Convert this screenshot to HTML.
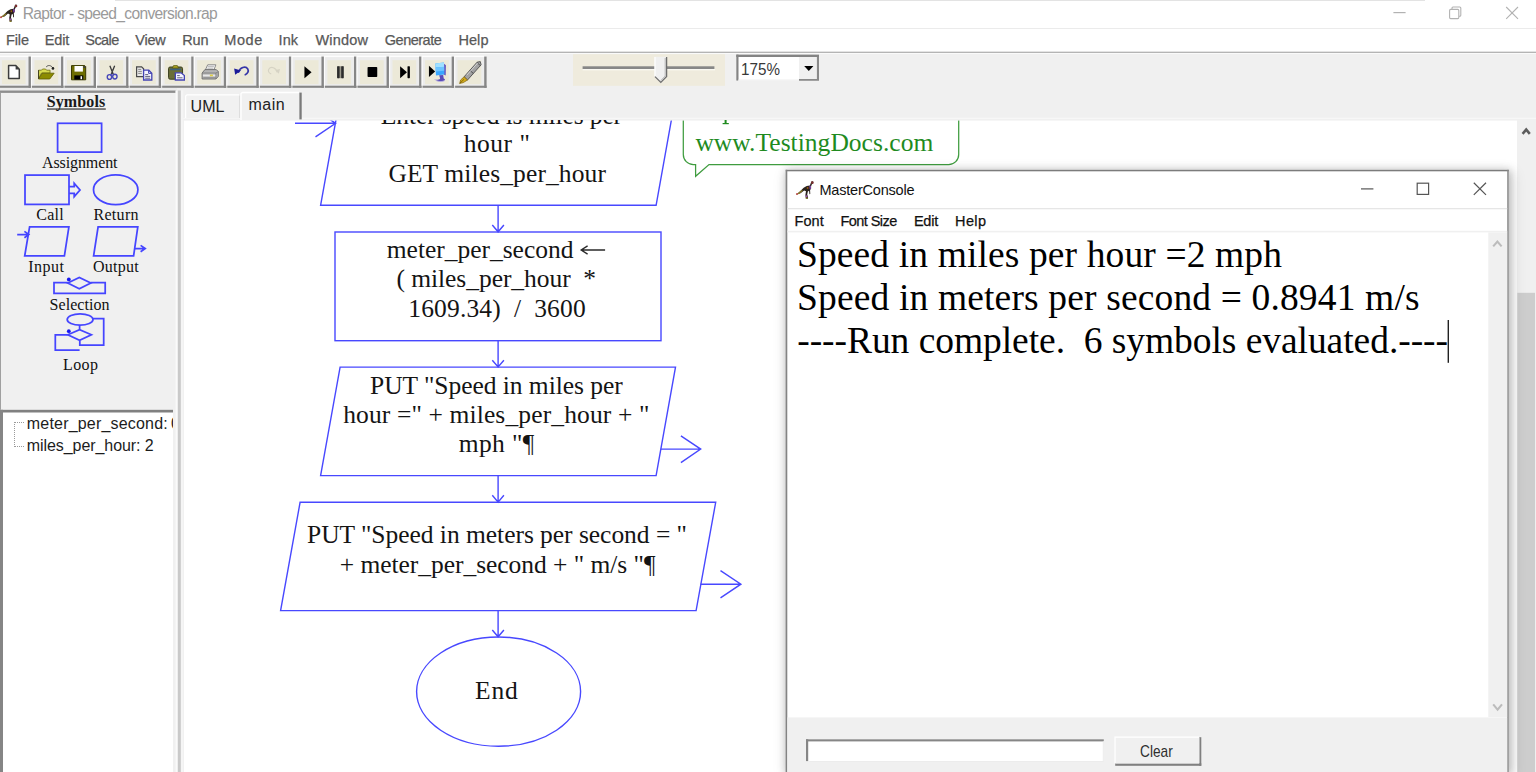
<!DOCTYPE html>
<html>
<head>
<meta charset="utf-8">
<title>Raptor - speed_conversion.rap</title>
<style>
html,body{margin:0;padding:0;width:1536px;height:772px;overflow:hidden;}
body{width:1536px;height:772px;overflow:hidden;position:relative;background:#f0f0f0;font-family:"Liberation Sans",sans-serif;}
.abs{position:absolute;}
.t{position:absolute;white-space:pre;line-height:1;}
#titlebar{left:0;top:0;width:1536px;height:28px;background:#fff;}
#menubar{left:0;top:29px;width:1536px;height:23px;background:#fff;}
.mi{position:absolute;top:32px;font-size:14.5px;color:#585858;-webkit-text-stroke:0.25px #585858;white-space:pre;line-height:16px;}
.tb{position:absolute;top:56px;width:30px;height:30px;background:#ece9d8;box-sizing:border-box;border:2px solid #f0f0f0;box-shadow:1px 1px 0 0 #7a7a7a, 2px 2px 0 0 #a0a0a0, -1px -1px 0 0 #fff;}
.serif{font-family:"Liberation Serif",serif;}
.fc{font-size:25.5px;color:#141414;}
</style>
</head>
<body>

<!-- ===== Title bar ===== -->
<div id="titlebar" class="abs"></div>
<div class="abs" style="left:115px;top:0;width:1310px;height:1px;background:#e3e3e3;"></div>
<div class="abs" style="left:0;top:28px;width:1536px;height:1px;background:#ebebeb;"></div>
<div class="t" style="left:22.7px;top:6.2px;font-size:15.6px;letter-spacing:-0.68px;color:#9a9a9a;">Raptor - speed_conversion.rap</div>


<svg class="abs" style="left:0;top:3px;" width="20" height="22" viewBox="0 0 20 22">
  <path d="M0.2 14.6 L3.5 12 L7.5 8 L10.5 6.2 L13.6 5.8 L14.6 3.2 L15.4 1.6 L16.8 1.8 L17 3.4 L15.6 4.6 L14.8 6.4 L14.8 9 L13.8 10.2 L14 14 L13.2 14.4 L12.8 11 L11.6 11.6 L11 14.5 L11.8 17.2 L11.4 19 L9.6 18.6 L9.2 15 L9.8 11.4 L8 10.6 L4.5 13.4 Z" fill="#2a221c"/>
  <path d="M0.2 14.6 L3.5 12 L6 10 L6.6 11.2 L3 14 Z" fill="#8a7a28"/>
  <circle cx="1" cy="14.2" r="1" fill="#c05050"/>
  <circle cx="16" cy="3" r="1.3" fill="#7a3030"/>
  <path d="M13 6.2 L14.6 6 L14.6 9 L13.4 9.4 Z" fill="#8040b0"/>
  <path d="M10.6 7.2 L12.2 7.4 L12 9.2 L10.6 9 Z" fill="#a05a10"/>
  <path d="M9.4 15.4 L11 15.6 L11.2 17.4 L9.6 17.4 Z" fill="#a050b0"/>
  <path d="M9.6 17.6 L11.4 17.6 L11.2 19 L9.6 18.8 Z" fill="#8a8420"/>
</svg>
<!-- window controls -->
<svg class="abs" style="left:1380px;top:0;" width="156" height="28" viewBox="1380 0 156 28" fill="none" stroke="#b2b2b2">
  <path d="M1393.4 12.6 H1405.6" stroke-width="1.2"/>
  <rect x="1449.6" y="9.4" width="9.2" height="9.2" rx="1" stroke-width="1.1"/>
  <path d="M1452 9.2 V8 a1 1 0 0 1 1 -1 H1459.8 a1 1 0 0 1 1 1 V15.2 a1 1 0 0 1 -1 1 H1459" stroke-width="1.1"/>
  <path d="M1506.2 7 L1518 18.8 M1518 7 L1506.2 18.8" stroke-width="1.1"/>
</svg>

<!-- ===== Menu bar ===== -->
<div id="menubar" class="abs"></div>
<div class="abs" style="left:0;top:51px;width:1536px;height:1px;background:#e4e4e4;"></div>
<div class="abs" style="left:0;top:52px;width:1536px;height:1px;background:#b4b4b4;"></div>
<div class="abs" style="left:0;top:53px;width:1536px;height:1px;background:#fafafa;"></div>

<div class="mi" id="m_File" style="left:6px;letter-spacing:-0.14px;">File</div>
<div class="mi" id="m_Edit" style="left:44.8px;letter-spacing:-0.19px;">Edit</div>
<div class="mi" id="m_Scale" style="left:85.3px;letter-spacing:-0.58px;">Scale</div>
<div class="mi" id="m_View" style="left:135.3px;letter-spacing:-0.27px;">View</div>
<div class="mi" id="m_Run" style="left:182.3px;letter-spacing:-0.21px;">Run</div>
<div class="mi" id="m_Mode" style="left:224.3px;letter-spacing:0.56px;">Mode</div>
<div class="mi" id="m_Ink" style="left:278.5px;letter-spacing:0.14px;">Ink</div>
<div class="mi" id="m_Window" style="left:315.5px;letter-spacing:0.16px;">Window</div>
<div class="mi" id="m_Generate" style="left:384.8px;letter-spacing:-0.5px;">Generate</div>
<div class="mi" id="m_Help" style="left:458.5px;letter-spacing:0.04px;">Help</div>

<!-- ===== Toolbar ===== -->
<!-- TOOLBAR-SVG-START -->
<svg class="abs" style="left:0;top:54px;" width="520" height="38" viewBox="0 54 520 38">
<rect x="-1.50" y="55.7" width="30" height="30" fill="#fdfdfd"/>
<rect x="-0.40" y="57.1" width="28.9" height="28.6" fill="#ececec"/>
<rect x="28.50" y="56.6" width="2.4" height="31.2" fill="#868686"/>
<rect x="-0.60" y="85.7" width="31.5" height="2.1" fill="#868686"/>
<rect x="1.90" y="60.2" width="23.7" height="23.9" fill="#ece9d8"/>
<rect x="31.05" y="55.7" width="30" height="30" fill="#fdfdfd"/>
<rect x="32.15" y="57.1" width="28.9" height="28.6" fill="#ececec"/>
<rect x="61.05" y="56.6" width="2.4" height="31.2" fill="#868686"/>
<rect x="31.95" y="85.7" width="31.5" height="2.1" fill="#868686"/>
<rect x="34.45" y="60.2" width="23.7" height="23.9" fill="#ece9d8"/>
<rect x="63.60" y="55.7" width="30" height="30" fill="#fdfdfd"/>
<rect x="64.70" y="57.1" width="28.9" height="28.6" fill="#ececec"/>
<rect x="93.60" y="56.6" width="2.4" height="31.2" fill="#868686"/>
<rect x="64.50" y="85.7" width="31.5" height="2.1" fill="#868686"/>
<rect x="67.00" y="60.2" width="23.7" height="23.9" fill="#ece9d8"/>
<rect x="96.15" y="55.7" width="30" height="30" fill="#fdfdfd"/>
<rect x="97.25" y="57.1" width="28.9" height="28.6" fill="#ececec"/>
<rect x="126.15" y="56.6" width="2.4" height="31.2" fill="#868686"/>
<rect x="97.05" y="85.7" width="31.5" height="2.1" fill="#868686"/>
<rect x="99.55" y="60.2" width="23.7" height="23.9" fill="#ece9d8"/>
<rect x="128.70" y="55.7" width="30" height="30" fill="#fdfdfd"/>
<rect x="129.80" y="57.1" width="28.9" height="28.6" fill="#ececec"/>
<rect x="158.70" y="56.6" width="2.4" height="31.2" fill="#868686"/>
<rect x="129.60" y="85.7" width="31.5" height="2.1" fill="#868686"/>
<rect x="132.10" y="60.2" width="23.7" height="23.9" fill="#ece9d8"/>
<rect x="161.25" y="55.7" width="30" height="30" fill="#fdfdfd"/>
<rect x="162.35" y="57.1" width="28.9" height="28.6" fill="#ececec"/>
<rect x="191.25" y="56.6" width="2.4" height="31.2" fill="#868686"/>
<rect x="162.15" y="85.7" width="31.5" height="2.1" fill="#868686"/>
<rect x="164.65" y="60.2" width="23.7" height="23.9" fill="#ece9d8"/>
<rect x="193.80" y="55.7" width="30" height="30" fill="#fdfdfd"/>
<rect x="194.90" y="57.1" width="28.9" height="28.6" fill="#ececec"/>
<rect x="223.80" y="56.6" width="2.4" height="31.2" fill="#868686"/>
<rect x="194.70" y="85.7" width="31.5" height="2.1" fill="#868686"/>
<rect x="197.20" y="60.2" width="23.7" height="23.9" fill="#ece9d8"/>
<rect x="226.35" y="55.7" width="30" height="30" fill="#fdfdfd"/>
<rect x="227.45" y="57.1" width="28.9" height="28.6" fill="#ececec"/>
<rect x="256.35" y="56.6" width="2.4" height="31.2" fill="#868686"/>
<rect x="227.25" y="85.7" width="31.5" height="2.1" fill="#868686"/>
<rect x="229.75" y="60.2" width="23.7" height="23.9" fill="#ece9d8"/>
<rect x="258.90" y="55.7" width="30" height="30" fill="#fdfdfd"/>
<rect x="260.00" y="57.1" width="28.9" height="28.6" fill="#ececec"/>
<rect x="288.90" y="56.6" width="2.4" height="31.2" fill="#868686"/>
<rect x="259.80" y="85.7" width="31.5" height="2.1" fill="#868686"/>
<rect x="262.30" y="60.2" width="23.7" height="23.9" fill="#ece9d8"/>
<rect x="291.45" y="55.7" width="30" height="30" fill="#fdfdfd"/>
<rect x="292.55" y="57.1" width="28.9" height="28.6" fill="#ececec"/>
<rect x="321.45" y="56.6" width="2.4" height="31.2" fill="#868686"/>
<rect x="292.35" y="85.7" width="31.5" height="2.1" fill="#868686"/>
<rect x="294.85" y="60.2" width="23.7" height="23.9" fill="#ece9d8"/>
<rect x="324.00" y="55.7" width="30" height="30" fill="#fdfdfd"/>
<rect x="325.10" y="57.1" width="28.9" height="28.6" fill="#ececec"/>
<rect x="354.00" y="56.6" width="2.4" height="31.2" fill="#868686"/>
<rect x="324.90" y="85.7" width="31.5" height="2.1" fill="#868686"/>
<rect x="327.40" y="60.2" width="23.7" height="23.9" fill="#ece9d8"/>
<rect x="356.55" y="55.7" width="30" height="30" fill="#fdfdfd"/>
<rect x="357.65" y="57.1" width="28.9" height="28.6" fill="#ececec"/>
<rect x="386.55" y="56.6" width="2.4" height="31.2" fill="#868686"/>
<rect x="357.45" y="85.7" width="31.5" height="2.1" fill="#868686"/>
<rect x="359.95" y="60.2" width="23.7" height="23.9" fill="#ece9d8"/>
<rect x="389.10" y="55.7" width="30" height="30" fill="#fdfdfd"/>
<rect x="390.20" y="57.1" width="28.9" height="28.6" fill="#ececec"/>
<rect x="419.10" y="56.6" width="2.4" height="31.2" fill="#868686"/>
<rect x="390.00" y="85.7" width="31.5" height="2.1" fill="#868686"/>
<rect x="392.50" y="60.2" width="23.7" height="23.9" fill="#ece9d8"/>
<rect x="421.65" y="55.7" width="30" height="30" fill="#fdfdfd"/>
<rect x="422.75" y="57.1" width="28.9" height="28.6" fill="#ececec"/>
<rect x="451.65" y="56.6" width="2.4" height="31.2" fill="#868686"/>
<rect x="422.55" y="85.7" width="31.5" height="2.1" fill="#868686"/>
<rect x="425.05" y="60.2" width="23.7" height="23.9" fill="#ece9d8"/>
<rect x="454.20" y="55.7" width="30" height="30" fill="#fdfdfd"/>
<rect x="455.30" y="57.1" width="28.9" height="28.6" fill="#ececec"/>
<rect x="484.20" y="56.6" width="2.4" height="31.2" fill="#868686"/>
<rect x="455.10" y="85.7" width="31.5" height="2.1" fill="#868686"/>
<rect x="457.60" y="60.2" width="23.7" height="23.9" fill="#ece9d8"/>
<g transform="translate(0.00,0)"><path d="M8.6 65.6 H15.8 L19.3 69.2 V78.6 H8.6 Z" fill="#fff" stroke="#3c3c3c" stroke-width="1.5" stroke-linejoin="round"/><path d="M15.6 65.6 V69.4 H19.3 Z" fill="#3c3c3c"/></g>
<g transform="translate(32.55,0)"><path d="M6 70.2 H9 L10 69 H13 L14 70.2 H17.5 V73 H9 L6 78.6 Z" fill="#d8dc50" stroke="#707010" stroke-width="0.8"/><path d="M9.6 73.2 H21.6 L17.2 79 H6 Z" fill="#8c8c00" stroke="#5c5c00" stroke-width="0.8"/><path d="M6 70.2 V78.8" stroke="#404020" stroke-width="1"/><path d="M13.6 67 C15.6 64.6 18.6 65.4 20 67.6" fill="none" stroke="#505050" stroke-width="1"/><circle cx="20.4" cy="68.4" r="1.3" fill="#202020"/></g>
<g transform="translate(65.10,0)"><path d="M6.4 65.6 H19.6 L20.6 66.6 V79.8 H6.4 Z" fill="#6e6e00" stroke="#3a3a00" stroke-width="1"/><rect x="9.4" y="66" width="8.4" height="5.6" fill="#fff"/><rect x="9.2" y="75.4" width="9" height="4.2" fill="#000"/><rect x="15.4" y="76.2" width="1.6" height="3" fill="#fff"/><rect x="18.4" y="66.2" width="1.4" height="1.6" fill="#303060"/></g>
<g transform="translate(97.65,0)"><path d="M12.2 65.8 L15.6 74.2 M17 65.8 L13.6 74.2" stroke="#383838" stroke-width="1.3" fill="none"/><path d="M13.6 69.6 L14.6 72.4 L15.6 69.6 Z" fill="#484848"/><ellipse cx="11.8" cy="77" rx="2.2" ry="2.4" fill="none" stroke="#4848b8" stroke-width="1.4"/><ellipse cx="17.2" cy="76.6" rx="2.2" ry="2.4" fill="none" stroke="#4848b8" stroke-width="1.4"/><path d="M14 74 L12.6 75.2 M15.4 74 L16.6 75" stroke="#4848b8" stroke-width="1.2"/></g>
<g transform="translate(130.20,0)"><path d="M6.4 66.8 H11.4 L13.4 68.8 V76.6 H6.4 Z" fill="#e8e8e8" stroke="#484848" stroke-width="1.2"/><path d="M8 69.4 H11 M8 71.4 H11.6 M8 73.4 H11.6" stroke="#707070" stroke-width="0.8"/><path d="M13.4 70.2 H18.6 L21.6 73.2 V80 H13.4 Z" fill="#f4f4ff" stroke="#4444b4" stroke-width="1.3"/><path d="M18.4 70.2 V73.4 H21.6" fill="none" stroke="#4444b4" stroke-width="1"/><path d="M15 74.6 H18 M15 76.4 H20 M15 78.2 H20" stroke="#505070" stroke-width="0.9"/></g>
<g transform="translate(162.75,0)"><rect x="5.8" y="67" width="14" height="12.2" rx="1.6" fill="#6a6e38" stroke="#3c4020" stroke-width="1"/><rect x="7.4" y="68.6" width="10.8" height="1.6" fill="#3a6080"/><path d="M9.6 68 L10.8 65.6 H14.6 L15.8 68 Z" fill="#b0a820" stroke="#505010" stroke-width="0.7"/><path d="M12.6 72.8 H18.4 L21.6 75.6 V80 H12.6 Z" fill="#f4f4ff" stroke="#4444b4" stroke-width="1.3"/><path d="M14.4 75.6 H17 M14.4 77.8 H19.8" stroke="#505070" stroke-width="0.9"/></g>
<g transform="translate(195.30,0)"><path d="M10 70 L12.4 64.8 H20.6 L18.6 70 Z" fill="#f6f6f6" stroke="#808080" stroke-width="0.9"/><path d="M12.6 66.6 H18.6 M12 68.2 H18" stroke="#a0a0a0" stroke-width="0.7"/><path d="M6.8 73 L9.6 69.6 H21 L23 71.6 V76.4 L20.6 79 H6.8 Z" fill="#b4b4b4" stroke="#6c6c6c" stroke-width="0.9"/><path d="M6.8 73 H20.6 L23 71.6 M20.6 73 V79" stroke="#787878" stroke-width="0.8" fill="none"/><rect x="7.6" y="74.6" width="12.4" height="1.8" fill="#e8e8e8"/><rect x="14.6" y="74.6" width="3" height="1.6" fill="#e0d040"/><path d="M8 77.6 H20" stroke="#8c8c8c" stroke-width="0.8"/></g>
<g transform="translate(227.85,0)"><path d="M10.8 72.2 C11.8 67.4 17.8 65.6 19.9 69 C21.2 71.4 19.6 73.8 17.4 74.7" fill="none" stroke="#3636a8" stroke-width="1.7" stroke-linecap="round"/><path d="M6.3 68.4 L13.2 70.4 L7.3 74.8 Z" fill="#1c1c98"/></g>
<g transform="translate(260.40,0)"><path d="M16.6 72 C15.8 67.6 10.4 66 8.4 69.2 C7.4 71 8.4 73 10.4 73.8" fill="none" stroke="#d6d3c4" stroke-width="1.2" stroke-linecap="round"/><path d="M19.6 69 L15 70 L18.4 73.8 Z" fill="#d6d3c4"/></g>
<g transform="translate(292.95,0)"><path d="M11.5 66.2 L18.6 72.2 L11.5 78.2 Z" fill="#000"/></g>
<g transform="translate(325.50,0)"><rect x="11.7" y="66.2" width="6.5" height="12" fill="#9c9a8c"/><rect x="11.6" y="66.2" width="2.5" height="12" rx="0.6" fill="#2c2c2c"/><rect x="15.7" y="66.2" width="2.5" height="12" rx="0.6" fill="#2c2c2c"/></g>
<g transform="translate(358.05,0)"><rect x="9.5" y="67" width="9.7" height="10" rx="0.8" fill="#000"/></g>
<g transform="translate(390.60,0)"><path d="M9.5 66.2 L16.4 72.2 L9.5 78.2 Z" fill="#000"/><rect x="16.9" y="66.2" width="2.4" height="12" rx="0.6" fill="#000"/></g>
<g transform="translate(423.15,0)"><path d="M20.6 63.4 L22.8 65.2 L22.6 75.4 L20.4 74.6 Z" fill="#6a5cc0"/><path d="M12.2 63.4 L20.8 62.6 L21.2 74.6 L12.8 75.4 Z" fill="#3aa6ff"/><path d="M12.2 63.4 L20.8 62.6 L20.95 67 L12.4 67.6 Z" fill="#a0e0ff"/><path d="M12.4 67.4 L20.95 66.8 L21.08 70.8 L12.6 71.5 Z" fill="#6cc4ff"/><path d="M16 75.2 L20 75 L20.6 78.6 C22 79 22.4 80 21 80.8 C18 82 14 81.6 12.4 79.8 C14 80 16.6 79.6 17 78.4 Z" fill="#5a4cb8"/><path d="M11.6 79.2 C13 81.6 19 82.4 21.8 80.4" fill="none" stroke="#b8b0e0" stroke-width="1"/><path d="M5.8 65.8 L12 71.4 L5.8 77 Z" fill="#000"/></g>
<g transform="translate(455.70,0)"><path d="M8.4 76.8 L21.4 62.2 L24.6 61.6 L25.4 64.8 L11.8 80 Z" fill="#a2a2a2" stroke="#4e4e4e" stroke-width="0.9" stroke-linejoin="round"/><path d="M14.2 70.4 L17.6 73.4 M21.2 62.6 L24.8 65.6" stroke="#484848" stroke-width="0.9"/><path d="M11 75.2 L22 63" stroke="#dadada" stroke-width="0.9"/><path d="M8.4 76.8 L11.8 80 L7.6 82.6 L4 83.4 L4.9 80 Z" fill="#d2aa1a" stroke="#7c600a" stroke-width="0.7"/><path d="M4 83.4 L8.4 79.2" stroke="#6c5408" stroke-width="0.7"/></g>
</svg>
<!-- TOOLBAR-SVG-END -->

<!-- SLIDER-START -->
<svg class="abs" style="left:560px;top:50px;" width="280" height="42" viewBox="560 50 280 42">
  <rect x="573" y="54.2" width="152" height="31.6" fill="#efebdd"/>
  <rect x="582.6" y="66.3" width="131.8" height="2.8" fill="#878787"/>
  <rect x="582.6" y="69.1" width="132.4" height="1.2" fill="#fbfbf6"/>
  <path d="M654.6 56.8 H667 V76.4 L660.8 82.8 L654.6 76.4 Z" fill="#f0f0f0"/>
  <path d="M655 57 V76.2" stroke="#ffffff" stroke-width="1.2" fill="none"/>
  <path d="M666.6 57 V76.4 L660.8 82.4 L655 76.6" stroke="#6e6e6e" stroke-width="1.3" fill="none"/>
  <path d="M665.2 58 V76 L660.8 80.6" stroke="#b4b4b4" stroke-width="1" fill="none"/>
  <!-- combo -->
  <rect x="736.3" y="54.6" width="82.7" height="26.4" fill="#ffffff"/>
  <rect x="736.3" y="54.6" width="82.7" height="2.4" fill="#848484"/>
  <rect x="736.3" y="54.6" width="2.2" height="26" fill="#848484"/>
  <rect x="738.5" y="79.4" width="60.5" height="1.6" fill="#f2f2f2"/>
  <rect x="799" y="57" width="20" height="23.8" fill="#8a8a8a"/>
  <rect x="799" y="57" width="17.9" height="22" fill="#f0f0f0"/>
  <path d="M804.2 66 H813.4 L808.8 71 Z" fill="#000"/>
</svg>
<div class="t" style="left:741px;top:61px;font-size:17.2px;color:#383838;transform:scaleX(0.885);transform-origin:0 0;">175%</div>
<!-- SLIDER-END -->

<!-- ===== Left panel ===== -->
<!-- LEFT-START -->
<svg class="abs" style="left:0;top:88px;" width="184" height="684" viewBox="0 88 184 684">
  <!-- panel frame -->
  <rect x="0" y="87.8" width="177" height="2.7" fill="#ebebeb"/>
  <rect x="0" y="90.5" width="175.6" height="2.4" fill="#8e8e8e"/>
  <rect x="0" y="92.9" width="1" height="317" fill="#a0a0a0"/>
  <rect x="175.6" y="91" width="1.6" height="681" fill="#fafafa"/>
  <rect x="177.9" y="90.5" width="3" height="682" fill="#c9c9c9"/>
  <rect x="180.9" y="90.5" width="2.4" height="682" fill="#f5f5f5"/>
  <!-- watch window -->
  <rect x="0" y="409.8" width="173" height="363" fill="#ffffff"/>
  <rect x="0" y="409.8" width="173" height="2.7" fill="#808080"/>
  <rect x="0" y="409.8" width="3" height="363" fill="#858585"/>
  <!-- tree dotted lines -->
  <path d="M14.5 422 V447" stroke="#9a9a9a" stroke-width="1" stroke-dasharray="1 1" fill="none"/>
  <path d="M15 422.5 H25" stroke="#9a9a9a" stroke-width="1" stroke-dasharray="1 1" fill="none"/>
  <path d="M15 446.5 H25" stroke="#9a9a9a" stroke-width="1" stroke-dasharray="1 1" fill="none"/>
  <!-- symbols -->
  <rect x="47" y="108.2" width="58.8" height="1.7" fill="#6a6a6a"/>
  <g fill="none" stroke="#4545ff" stroke-width="1.75">
    <rect x="57.6" y="123.3" width="44" height="28.8"/>
    <rect x="25" y="175.1" width="44" height="29.3"/>
    <path d="M69 186.6 H74.2 V183.4 L80 190 L74.2 196.6 V193.4 H69"/>
    <ellipse cx="115.7" cy="189.7" rx="22.2" ry="14.9"/>
    <path d="M29.6 226.8 H68.9 L64.4 255.9 H24.7 Z"/>
    <path d="M17.2 234.6 H28.6 M24.4 231.4 L28.8 234.6 L24.4 237.8"/>
    <path d="M98.1 226.8 H137.8 L133.6 255.9 H93.6 Z"/>
    <path d="M135 248.6 H145 M140.6 245.4 L145.2 248.6 L140.6 251.8"/>
    <path d="M68.4 282.7 H54 V293.4 H105.2 V282.7 H90.6"/>
    <path d="M67.8 283 L79.3 277.4 L90.8 283 L79.3 288.7 Z"/>
    <ellipse cx="80.1" cy="319.5" rx="12.9" ry="5.6"/>
    <path d="M93 318.7 H103.7 V345.2 H79.8 V340.4"/>
    <path d="M67.8 334.8 L79.6 329.6 L91.4 334.8 L79.6 340.2 Z"/>
    <path d="M79.6 325.2 V329.6"/>
    <path d="M67.8 334.8 H55.3 V350.2 H79.6"/>
  </g>
  <circle cx="68.8" cy="279.4" r="1.9" fill="#1818f0"/>
  <circle cx="68.8" cy="331.2" r="1.9" fill="#1818f0"/>
</svg>
<div class="t serif" style="left:46.7px;top:93.6px;font-size:16px;font-weight:bold;letter-spacing:0.13px;color:#1a1a1a;">Symbols</div>
<div class="t serif" style="left:42px;top:154.8px;font-size:16px;letter-spacing:-0.1px;color:#111;">Assignment</div>
<div class="t serif" style="left:36.3px;top:206.6px;font-size:16px;letter-spacing:0.22px;color:#111;">Call</div>
<div class="t serif" style="left:93.4px;top:206.6px;font-size:16px;letter-spacing:0.32px;color:#111;">Return</div>
<div class="t serif" style="left:28.3px;top:258.6px;font-size:16px;letter-spacing:0.45px;color:#111;">Input</div>
<div class="t serif" style="left:93px;top:258.6px;font-size:16px;letter-spacing:0.23px;color:#111;">Output</div>
<div class="t serif" style="left:49.5px;top:297.3px;font-size:16px;letter-spacing:0.07px;color:#111;">Selection</div>
<div class="t serif" style="left:63px;top:357.4px;font-size:16px;letter-spacing:0.37px;color:#111;">Loop</div>
<div class="abs" style="left:3px;top:413px;width:170px;height:50px;overflow:hidden;">
  <div class="t" style="left:23.8px;top:2.8px;font-size:16px;letter-spacing:0.19px;word-spacing:-1.4px;color:#1c1c1c;">meter_per_second: 0.8941</div>
  <div class="t" style="left:23.8px;top:24.8px;font-size:16px;letter-spacing:-0.07px;color:#1c1c1c;">miles_per_hour: 2</div>
</div>
<!-- LEFT-END -->


<!-- ===== Canvas ===== -->
<!-- CANVAS-START -->
<!-- tabs -->
<svg class="abs" style="left:183px;top:90px;" width="1353" height="32" viewBox="183 90 1353 32">
  <rect x="183.4" y="117.8" width="1353" height="1.2" fill="#f7f7f7"/>
  <!-- UML tab -->
  <rect x="185" y="94.2" width="55" height="24" fill="#f1f1f1"/>
  <path d="M185.6 118 V96 L187 94.8 H239" fill="none" stroke="#ffffff" stroke-width="1.3"/>
  <path d="M239.6 95.6 V118" stroke="#dcdcdc" stroke-width="1" fill="none"/>
  <!-- main tab -->
  <rect x="240.4" y="92" width="60" height="28.6" fill="#f0f0f0"/>
  <path d="M241 120 V93.6 L242.4 92.5 H299" fill="none" stroke="#ffffff" stroke-width="1.3"/>
  <rect x="299.4" y="92.6" width="2.3" height="26.8" fill="#7a7a7a"/>
</svg>
<div class="t" style="left:190.6px;top:98.5px;font-size:16px;color:#222;">UML</div>
<div class="t" style="left:248.5px;top:97.4px;font-size:16px;letter-spacing:0.5px;color:#222;">main</div>
<div id="canvas" class="abs" style="left:184px;top:120px;width:1333px;height:652px;background:#fff;overflow:hidden;">
<div class="abs" style="left:-184px;top:-120px;width:1536px;height:772px;">
<svg class="abs" style="left:0;top:0;" width="1536" height="772" viewBox="0 0 1536 772">
  <g fill="none" stroke="#4848ff" stroke-width="1.4" stroke-linejoin="miter">
    <path d="M340.1 97 H675.5 L656.1 205.3 H320.6 Z"/>
    <path d="M295 123.3 H335.4 M315.5 136.9 L335.6 123.3 L315.5 109.7"/>
    <path d="M498.1 205.3 V231.8 M492.3 225.0 L498.1 231.8 L503.90000000000003 225.0"/>
    <rect x="335" y="232" width="326" height="108.7"/>
    <path d="M498.1 340.7 V367 M492.3 360.2 L498.1 367 L503.90000000000003 360.2"/>
    <path d="M340.1 367.1 H675.5 L656.1 475.6 H320.6 Z"/>
    <path d="M660.8 449.1 H700.2 M680.9 435.9 L700.7 449.1 L680.9 462.6"/>
    <path d="M498.1 475.6 V502.1 M492.3 495.3 L498.1 502.1 L503.90000000000003 495.3"/>
    <path d="M300.1 502.3 H715.7 L696.1 610.6 H280.6 Z"/>
    <path d="M700.6 584.2 H740.4 M720.5 570.7 L740.9 584.2 L720.5 597.9"/>
    <path d="M498.1 610.6 V636.8 M492.3 630.0 L498.1 636.8 L503.90000000000003 630.0"/>
    <ellipse cx="498.6" cy="691.6" rx="82" ry="54.6"/>
  </g>
  <!-- assignment arrow glyph -->
  <path d="M581 250 H605.1 M587.6 245.9 L581.2 250 L587.6 254.1" fill="none" stroke="#2a2a2a" stroke-width="1.4"/>
  <g fill="none" stroke="#3f9c3f" stroke-width="1.25">
    <path d="M683.3 100 V154.6 a10 10 0 0 0 10 10 H695.6 V176.3 L709 164.6 H948.7 a10 10 0 0 0 10 -10 V100"/>
  </g>
  <rect x="184" y="120" width="1333" height="0.6" fill="#f0f0f0"/>
  <rect x="724.6" y="118" width="2" height="5.6" fill="#1f8b1f"/>
  <rect x="722.6" y="123" width="6.2" height="1.2" fill="#1f8b1f"/>
</svg>
<div class="t serif fc" style="left:380.8px;top:102.7px;letter-spacing:-0.1px;">Enter speed is miles per</div>
<div class="t serif fc" style="left:463.8px;top:130.6px;letter-spacing:0.5px;">hour "</div>
<div class="t serif fc" style="left:388.4px;top:160.7px;letter-spacing:0.12px;">GET miles_per_hour</div>
<div class="t serif fc" style="left:386.8px;top:237.1px;letter-spacing:-0.02px;">meter_per_second</div>
<div class="t serif fc" style="left:396.4px;top:266.4px;letter-spacing:-0.04px;">( miles_per_hour  *</div>
<div class="t serif fc" style="left:408.3px;top:296.2px;letter-spacing:0.15px;">1609.34)  /  3600</div>
<div class="t serif fc" style="left:370px;top:372.7px;letter-spacing:-0.04px;">PUT "Speed in miles per</div>
<div class="t serif fc" style="left:343.2px;top:401.9px;letter-spacing:0.13px;">hour =" + miles_per_hour + "</div>
<div class="t serif fc" style="left:458.7px;top:431.3px;letter-spacing:0.4px;">mph "¶</div>
<div class="t serif fc" style="left:307px;top:522.2px;letter-spacing:-0.03px;">PUT "Speed in meters per second = "</div>
<div class="t serif fc" style="left:339.8px;top:552.3px;letter-spacing:-0.04px;">+ meter_per_second + " m/s "¶</div>
<div class="t serif fc" style="left:475.1px;top:678.2px;letter-spacing:0.77px;">End</div>
<div class="t serif fc" style="left:695.4px;top:129.6px;letter-spacing:0.03px;color:#1f8b1f;">www.TestingDocs.com</div>
</div>
</div>
<!-- CANVAS-END -->

<!-- ===== Main scrollbar ===== -->
<!-- VSCROLL-START -->
<svg class="abs" style="left:1517px;top:119px;" width="19" height="653" viewBox="1517 119 19 653">
  <rect x="1517" y="119" width="19" height="653" fill="#f0f0f0"/>
  <rect x="1517.3" y="292.8" width="17.7" height="480" fill="#cdcdcd"/>
  <path d="M1522.6 133.8 L1526.2 129.6 L1529.8 133.8" fill="none" stroke="#5c5c5c" stroke-width="2.6"/>
</svg>
<!-- VSCROLL-END -->

<!-- ===== MasterConsole ===== -->
<!-- CONSOLE-START -->
<div class="abs" style="left:786px;top:170px;width:722.6px;height:602px;background:#fff;box-shadow:1px 1px 8px 1px rgba(0,0,0,0.21), 2px 4px 14px 2px rgba(0,0,0,0.11);"></div>
<svg class="abs" style="left:780px;top:165px;" width="740" height="607" viewBox="780 165 740 607">
  <!-- frame -->
  <rect x="785.8" y="169.8" width="723" height="602.2" fill="#ffffff" stroke="none"/>
  <rect x="785.8" y="169.8" width="723" height="1.5" fill="#7c7c7c"/>
  <rect x="785.6" y="169.8" width="1.7" height="602.2" fill="#848484"/>
  <rect x="1507.2" y="169.8" width="1.6" height="602.2" fill="#8a8a8a"/>
  <!-- title/menu separators -->
  <rect x="787.4" y="208" width="719.8" height="1.3" fill="#e6e6e6"/>
  <rect x="787.4" y="230.8" width="719.8" height="1.6" fill="#f0f0f0"/>
  <!-- text area scrollbar -->
  <rect x="1488.3" y="232.4" width="18.9" height="484.6" fill="#f0f0f0"/>
  <path d="M1493.2 246.4 L1497.4 241.6 L1501.6 246.4" fill="none" stroke="#bcbcbc" stroke-width="2.1"/>
  <path d="M1493.2 704.4 L1497.6 709.6 L1502 704.4" fill="none" stroke="#bcbcbc" stroke-width="2.1"/>
  <!-- bottom panel -->
  <rect x="787.4" y="717.4" width="719.8" height="54.6" fill="#f0f0f0"/>
  <!-- input box -->
  <rect x="806" y="739.3" width="297.8" height="22.6" fill="#ffffff"/>
  <rect x="806" y="739.3" width="297.8" height="2.1" fill="#868686"/>
  <rect x="806" y="739.3" width="2.2" height="21.9" fill="#868686"/>
  <rect x="808.2" y="761" width="295.6" height="1" fill="#ececec"/>
  <rect x="1102.8" y="741.4" width="1" height="20" fill="#ececec"/>
  <!-- Clear button -->
  <rect x="1199.2" y="737.2" width="2.1" height="28.6" fill="#808080"/>
  <rect x="1115.2" y="763.3" width="86.1" height="2.5" fill="#808080"/>
  <rect x="1114.3" y="736.4" width="84.9" height="26.9" fill="#fdfdfd"/>
  <rect x="1115.8" y="737.9" width="83.4" height="25.4" fill="#f0f0f0"/>
  <!-- caret -->
  <rect x="1447.6" y="320" width="1.4" height="42.8" fill="#222"/>
  <!-- window buttons -->
  <path d="M1361 188.9 H1373.4" stroke="#555" stroke-width="1.2" fill="none"/>
  <rect x="1417.2" y="183.2" width="11.4" height="11.2" fill="none" stroke="#555" stroke-width="1.2"/>
  <path d="M1473.8 182.8 L1486 194.9 M1486 182.8 L1473.8 194.9" stroke="#555" stroke-width="1.2" fill="none"/>
  <!-- icon -->
  <g transform="translate(796,179.6) scale(1.02)">
    <path d="M0.2 14.6 L3.5 12 L7.5 8 L10.5 6.2 L13.6 5.8 L14.6 3.2 L15.4 1.6 L16.8 1.8 L17 3.4 L15.6 4.6 L14.8 6.4 L14.8 9 L13.8 10.2 L14 14 L13.2 14.4 L12.8 11 L11.6 11.6 L11 14.5 L11.8 17.2 L11.4 19 L9.6 18.6 L9.2 15 L9.8 11.4 L8 10.6 L4.5 13.4 Z" fill="#2a221c"/>
    <path d="M0.2 14.6 L3.5 12 L6 10 L6.6 11.2 L3 14 Z" fill="#8a7a28"/>
    <circle cx="1" cy="14.2" r="1" fill="#c05050"/>
    <circle cx="16" cy="3" r="1.3" fill="#7a3030"/>
    <path d="M13 6.2 L14.6 6 L14.6 9 L13.4 9.4 Z" fill="#8040b0"/>
    <path d="M10.6 7.2 L12.2 7.4 L12 9.2 L10.6 9 Z" fill="#a05a10"/>
    <path d="M9.4 15.4 L11 15.6 L11.2 17.4 L9.6 17.4 Z" fill="#a050b0"/>
    <path d="M9.6 17.6 L11.4 17.6 L11.2 19 L9.6 18.8 Z" fill="#8a8420"/>
  </g>
</svg>
<div class="t" style="left:819.5px;top:183.1px;font-size:14.5px;letter-spacing:-0.21px;color:#111;">MasterConsole</div>
<div class="t" style="left:794.4px;top:214.0px;font-size:14.5px;letter-spacing:0.13px;color:#111;-webkit-text-stroke:0.25px #111;">Font</div>
<div class="t" style="left:840.4px;top:214.0px;font-size:14.5px;letter-spacing:-0.54px;color:#111;-webkit-text-stroke:0.25px #111;">Font Size</div>
<div class="t" style="left:913.9px;top:214.0px;font-size:14.5px;letter-spacing:-0.19px;color:#111;-webkit-text-stroke:0.25px #111;">Edit</div>
<div class="t" style="left:955.1px;top:214.0px;font-size:14.5px;letter-spacing:0.37px;color:#111;-webkit-text-stroke:0.25px #111;">Help</div>
<div class="t serif" style="left:797px;top:236.0px;font-size:37.5px;letter-spacing:0.12px;color:#000;">Speed in miles per hour =2 mph</div>
<div class="t serif" style="left:797px;top:279.1px;font-size:37.5px;letter-spacing:0.15px;color:#000;">Speed in meters per second = 0.8941 m/s</div>
<div class="t serif" style="left:797.2px;top:322.1px;font-size:37.5px;letter-spacing:-0.05px;color:#000;">----Run complete.  6 symbols evaluated.----</div>
<div class="t" style="left:1140px;top:742.8px;font-size:16.2px;color:#2e2e2e;transform:scaleX(0.845);transform-origin:0 0;">Clear</div>
<!-- CONSOLE-END -->

</body>
</html>
